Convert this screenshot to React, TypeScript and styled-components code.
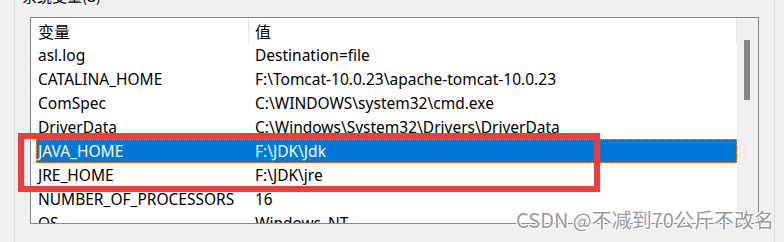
import React from "react";
import styled, { createGlobalStyle } from "styled-components";

const rows = [
  { name: "asl.log", value: "Destination=file" },
  { name: "CATALINA_HOME", value: "F:\\Tomcat-10.0.23\\apache-tomcat-10.0.23" },
  { name: "ComSpec", value: "C:\\WINDOWS\\system32\\cmd.exe" },
  { name: "DriverData", value: "C:\\Windows\\System32\\Drivers\\DriverData" },
  { name: "JAVA_HOME", value: "F:\\JDK\\Jdk", selected: true },
  { name: "JRE_HOME", value: "F:\\JDK\\jre" },
  { name: "NUMBER_OF_PROCESSORS", value: "16" },
  { name: "OS", value: "Windows_NT" },
];

const App = () => {
  return (
    <>
      <GlobalStyle />
      <Page>
        <Group>
          <Legend>系统变量(S)</Legend>
          <ListBox>
            <Content>
              <Header>
                <HeadCell $first>变量</HeadCell>
                <HeadCell>值</HeadCell>
              </Header>
              {rows.map((r) => (
                <Row key={r.name} $selected={!!r.selected}>
                  <NameCell>{r.name}</NameCell>
                  <ValueCell>{r.value}</ValueCell>
                </Row>
              ))}
            </Content>
            <ScrollBar>
              <Thumb />
            </ScrollBar>
          </ListBox>
        </Group>
        <RedMark />
        <Watermark>CSDN @不减到70公斤不改名</Watermark>
      </Page>
    </>
  );
};

export default App;

const GlobalStyle = createGlobalStyle`
  body {
    margin: 0;
    background: #f0f0f0;
    overflow: hidden;
  }
`;

const Page = styled.div`
  position: relative;
  width: 784px;
  height: 242px;
  overflow: hidden;
  font-family: "Noto Sans", "Noto Sans CJK SC", sans-serif;
  font-size: 15.5px;
  color: #000;
`;

const Group = styled.div`
  display: flex;
  flex-direction: column;
  margin-left: 14px;
  width: 761px;
  height: 242px;
  box-sizing: border-box;
  border-left: 1px solid #dcdcdc;
  border-right: 1px solid #dcdcdc;
  padding-left: 15px;
`;

const Legend = styled.div`
  height: 31px;
  margin: -14px 0 0 -8px;
  line-height: 20px;
  flex-shrink: 0;
  font-family: "Noto Sans CJK SC", sans-serif;
  font-size: 15px;
  color: #000;
`;

const ListBox = styled.div`
  display: flex;
  width: 729px;
  height: 207px;
  flex-shrink: 0;
  box-sizing: border-box;
  border: 1px solid #828790;
  background: #fff;
  overflow: hidden;
`;

const Content = styled.div`
  flex: 1;
  display: flex;
  flex-direction: column;
`;

const Header = styled.div`
  display: flex;
  height: 25px;
  flex-shrink: 0;
  border-right: 1px solid #e5e5e5;
  font-family: "Noto Sans CJK SC", sans-serif;
  font-size: 16px;
`;

const HeadCell = styled.div<{ $first?: boolean }>`
  display: flex;
  align-items: center;
  line-height: 20px;
  ${(p) =>
    p.$first
      ? `width: 210px; padding-left: 7px; border-right: 1px solid #e5e5e5;`
      : `flex: 1; padding-left: 6px;`}
`;

const Row = styled.div<{ $selected: boolean }>`
  display: flex;
  align-items: center;
  height: 24px;
  flex-shrink: 0;
  margin-left: 5px;
  box-sizing: border-box;
  white-space: nowrap;
  background: ${(p) => (p.$selected ? "#0078d7" : "transparent")};
  color: ${(p) => (p.$selected ? "#fff" : "#000")};
  border: 1px dotted ${(p) => (p.$selected ? "#ff8728" : "transparent")};
`;

const NameCell = styled.div`
  width: 217px;
  padding-left: 1px;
`;

const ValueCell = styled.div`
  flex: 1;
`;

const ScrollBar = styled.div`
  width: 21px;
  flex-shrink: 0;
  background: #f0f0f0;
  padding: 22px 0 0 7px;
  box-sizing: border-box;
`;

const Thumb = styled.div`
  width: 6px;
  height: 60px;
  background: #858585;
`;

const RedMark = styled.div`
  position: absolute;
  left: 18px;
  top: 133px;
  width: 582px;
  height: 59px;
  box-sizing: border-box;
  border: 6px solid #f23c3c;
`;

const Watermark = styled.div`
  position: absolute;
  left: 516px;
  top: 207px;
  font-family: "Noto Sans CJK SC", "Noto Sans", sans-serif;
  font-size: 20px;
  line-height: 26px;
  color: #9a9a9a;
  white-space: nowrap;
  text-shadow: 1px 1px 0 #fff, -1px -1px 0 #fff, 1px -1px 0 #fff, -1px 1px 0 #fff;
`;
